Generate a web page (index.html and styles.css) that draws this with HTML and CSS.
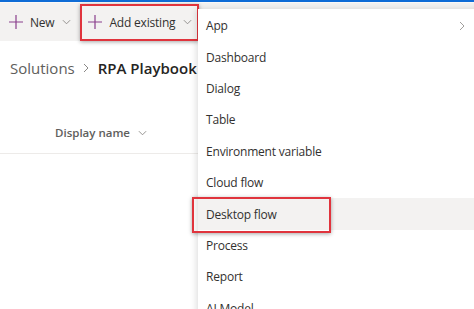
FILE: index.html
```html
<!DOCTYPE html>
<html lang="en">
<head>
    <meta charset="UTF-8">
    <title>Add existing - Solutions</title>
    <link rel="stylesheet" href="styles.css">
</head>
<body>
    <div class="accent-bar"></div>

    <!-- command bar -->
    <div class="command-bar">
        <div class="cmd">
            <svg class="plus" viewBox="0 0 16 16"><path d="M8 1v14M1 8h14"/></svg>
            <span>New</span>
            <svg class="chev" viewBox="0 0 10 6"><path d="M1 1l4 4 4-4"/></svg>
        </div>
        <div class="cmd cmd-marked">
            <svg class="plus" viewBox="0 0 16 16"><path d="M8 1v14M1 8h14"/></svg>
            <span>Add existing</span>
            <svg class="chev" viewBox="0 0 10 6"><path d="M1 1l4 4 4-4"/></svg>
        </div>
    </div>

    <div class="main">
        <div class="breadcrumb">
            <span class="crumb">Solutions</span>
            <svg class="crumb-sep" viewBox="0 0 6 10"><path d="M1 1l4 4-4 4"/></svg>
            <span class="crumb-current">RPA Playbook</span>
        </div>
        <div class="grid-header">
            <span>Display name</span>
            <svg class="chev" viewBox="0 0 10 6"><path d="M1 1l4 4 4-4"/></svg>
        </div>
    </div>

    <!-- dropdown -->
    <div class="menu">
        <div class="menu-item">App<svg class="sub" viewBox="0 0 6 10"><path d="M1 1l4 4-4 4"/></svg></div>
        <div class="menu-item">Dashboard</div>
        <div class="menu-item">Dialog</div>
        <div class="menu-item">Table</div>
        <div class="menu-item">Environment variable</div>
        <div class="menu-item">Cloud flow</div>
        <div class="menu-item selected">Desktop flow</div>
        <div class="menu-item">Process</div>
        <div class="menu-item">Report</div>
        <div class="menu-item">AI Model</div>
    </div>
    <div class="mark-desktop"></div>
</body>
</html>
```

FILE: styles.css
```css
* {
    margin: 0;
    padding: 0;
    box-sizing: border-box;
}

body {
    font-family: "Open Sans", "Noto Sans", sans-serif;
    background: #fff;
    color: #323130;
    width: 474px;
    height: 309px;
    overflow: hidden;
    position: relative;
}

.accent-bar {
    height: 2px;
    background: #0f6cd6;
}

.command-bar {
    height: 39px;
    background: #f3f2f1;
    border-top: 1px solid #faf9f8;
    display: flex;
    align-items: center;
    padding-left: 7px;
}

.cmd {
    display: flex;
    align-items: center;
    height: 37px;
    padding: 0 6px 0 1px;
    font-size: 12px;
    letter-spacing: -0.2px;
    color: #323130;
}

.cmd-marked {
    margin-left: 3px;
    padding: 0 5px 0 5px;
    border: 2px solid #e0343d;
    box-shadow: 0 1px 4px rgba(0,0,0,0.35);
}

.plus {
    width: 16px;
    height: 16px;
    margin-right: 6px;
    fill: none;
    stroke: #8a3f8d;
    stroke-width: 1.2;
}

.chev {
    width: 9px;
    height: 6px;
    margin-left: 8px;
    fill: none;
    stroke: #8a8886;
    stroke-width: 1;
}

.main {
    width: 198px;
}

.breadcrumb {
    display: flex;
    align-items: center;
    height: 52px;
    padding-left: 10px;
    padding-top: 1px;
    font-size: 15px;
    white-space: nowrap;
}

.crumb {
    color: #605e5c;
}

.crumb-sep {
    width: 6px;
    height: 10px;
    margin: 0 9px 0 8px;
    fill: none;
    stroke: #8a8886;
    stroke-width: 1;
}

.crumb-current {
    font-weight: 600;
    color: #252423;
}

.grid-header {
    display: flex;
    align-items: center;
    height: 61px;
    padding-left: 55px;
    padding-top: 19px;
    font-size: 11.5px;
    font-weight: 600;
    color: #605e5c;
    border-bottom: 1px solid #edebe9;
}

.menu {
    position: absolute;
    left: 198px;
    top: 9px;
    width: 290px;
    height: 310px;
    background: #fff;
    box-shadow: -2px 0 6px rgba(0,0,0,0.12);
    padding-top: 1px;
}

.menu-item {
    display: flex;
    align-items: center;
    height: 31.4px;
    padding-left: 8px;
    font-size: 12px;
    letter-spacing: -0.2px;
    color: #323130;
}

.menu-item.selected {
    background: #f3f2f1;
}

.sub {
    width: 6px;
    height: 10px;
    margin-left: auto;
    margin-right: 23px;
    fill: none;
    stroke: #a19f9d;
    stroke-width: 1;
}

.mark-desktop {
    position: absolute;
    left: 192px;
    top: 197px;
    width: 139px;
    height: 36px;
    border: 2px solid #e0343d;
    box-shadow: 0 1px 4px rgba(0,0,0,0.35);
}
```
